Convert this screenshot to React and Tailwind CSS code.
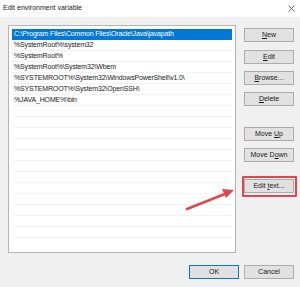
import React from 'react'

const paths = [
  'C:\\Program Files\\Common Files\\Oracle\\Java\\javapath',
  '%SystemRoot%\\system32',
  '%SystemRoot%',
  '%SystemRoot%\\System32\\Wbem',
  '%SYSTEMROOT%\\System32\\WindowsPowerShell\\v1.0\\',
  '%SYSTEMROOT%\\System32\\OpenSSH\\',
  '%JAVA_HOME%\\bin',
]

function Btn({ children, className = '', primary }) {
  return (
    <div
      className={
        'h-[14px] w-[50px] flex items-center justify-center text-[7px] text-[#1a1a1a] bg-[#e1e1e1] border ' +
        (primary ? 'border-[#0078d7] ' : 'border-[#adadad] ') +
        className
      }
    >
      <span className="whitespace-pre">{children}</span>
    </div>
  )
}

const U = ({ children }) => <span className="underline underline-offset-1">{children}</span>

export default function App() {
  return (
    <div className="relative w-[300px] h-[287px] bg-[#f0f0f0] overflow-hidden" style={{ fontFamily: '"Liberation Sans", Arial, sans-serif' }}>
      {/* Title bar */}
      <div className="h-[17px] bg-white flex items-center justify-between pl-[3px] pr-[5px]">
        <span className="text-[7px] text-[#1a1a1a]">Edit environment variable</span>
        <svg width="7" height="7" viewBox="0 0 7 7">
          <path d="M0.5 0.5L6.5 6.5M6.5 0.5L0.5 6.5" stroke="#444" strokeWidth="0.8" />
        </svg>
      </div>

      <div className="flex pt-[8px]">
        {/* List box */}
        <div className="ml-[8px] w-[228px] h-[228px] bg-white border border-[#b4b4b4] pt-[3px] px-[3px]">
          {paths.map((p, i) => (
            <div
              key={i}
              className={
                'h-[11px] flex items-center px-[2px] text-[7px] tracking-[-0.15px] whitespace-nowrap overflow-hidden border-b ' +
                (i === 0 ? 'bg-[#0078d7] text-white border-[#0078d7]' : 'text-[#1a1a1a] border-[#f2f2f2]')
              }
            >
              {p}
            </div>
          ))}
          {Array.from({ length: 12 }).map((_, i) => (
            <div key={i} className="h-[11px] border-b border-[#f4f4f4]" />
          ))}
        </div>

        {/* Buttons */}
        <div className="ml-[8px] pt-[3px] flex flex-col">
          <Btn><U>N</U>ew</Btn>
          <Btn className="mt-[8px]"><U>E</U>dit</Btn>
          <Btn className="mt-[7px]"><U>B</U>rowse...</Btn>
          <Btn className="mt-[7px]"><U>D</U>elete</Btn>
          <Btn className="mt-[21px]">Move <U>U</U>p</Btn>
          <Btn className="mt-[7px]">Move D<U>o</U>wn</Btn>
          <div className="relative mt-[17px]">
            <Btn>Edit <U>t</U>ext...</Btn>
            <div className="absolute -left-[2px] -right-[3px] -top-[3px] -bottom-[4px] border-2 border-[#e0474c] rounded-[1px]" />
          </div>
        </div>
      </div>

      {/* Bottom buttons */}
      <div className="flex justify-end gap-[5px] pr-[6px] mt-[12px]">
        <Btn primary>OK</Btn>
        <Btn>Cancel</Btn>
      </div>

      {/* Annotation arrow */}
      <svg className="absolute left-0 top-0 pointer-events-none" width="300" height="287">
        <line x1="187" y1="209" x2="226" y2="193.5" stroke="#e0474c" strokeWidth="2.5" strokeLinecap="round" />
        <polygon points="234,190 222,189 226,198" fill="#e0474c" />
      </svg>
    </div>
  )
}
